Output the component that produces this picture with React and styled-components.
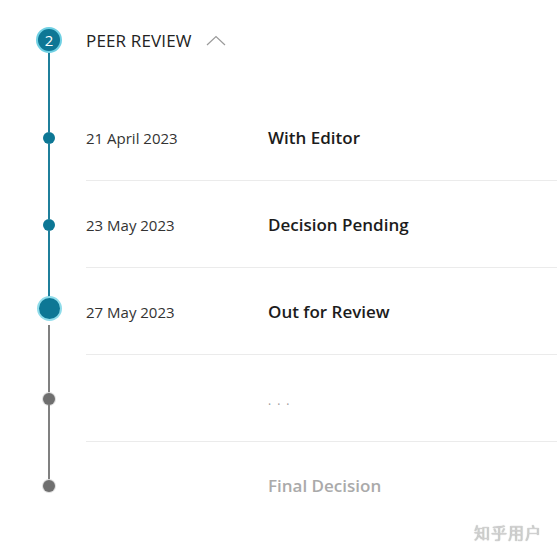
import React from 'react'
import styled, { createGlobalStyle } from 'styled-components'

const GlobalStyle = createGlobalStyle`
  body {
    margin: 0;
    background: #fff;
    font-family: "Open Sans", "Noto Sans", sans-serif;
  }
`

const TEAL = '#1f7f9b'
const GREY = '#808080'

const Page = styled.div`
  position: relative;
  width: 557px;
  height: 552px;
  padding: 27px 0 0 36px;
  box-sizing: border-box;
  overflow: hidden;
`

const Header = styled.div`
  display: flex;
  height: 67px;
  gap: 24px;
`

const Rail = styled.div`
  width: 26px;
  flex: none;
  display: flex;
  flex-direction: column;
  align-items: center;
`

const Segment = styled.div`
  flex: 1;
  width: 1.5px;
  background: ${p => (p.$color ? p.$color : 'transparent')};
`

const StageBadge = styled.div`
  width: 26px;
  height: 26px;
  box-sizing: border-box;
  border-radius: 50%;
  background: #0d7795;
  border: 2px solid #6fd0e3;
  color: #fff;
  font-size: 15px;
  display: flex;
  align-items: center;
  justify-content: center;
  flex: none;
`

const HeaderTitle = styled.div`
  height: 26px;
  display: flex;
  align-items: center;
  gap: 14px;
  font-size: 17px;
  letter-spacing: 0.15px;
  color: #222;
`

const Row = styled.div`
  display: flex;
  height: 87px;
  gap: 24px;
`

const Dot = styled.div`
  flex: none;
  width: ${p => (p.$big ? '21px' : '12px')};
  height: ${p => (p.$big ? '21px' : '12px')};
  border-radius: 50%;
  background: ${p => (p.$done ? '#0d7795' : '#6f6f6f')};
  box-shadow: ${p =>
    p.$big ? '0 0 0 2px #8fdcea' : p.$done ? 'none' : '0 0 0 1px #ddd'};
  margin: ${p => (p.$big ? '0 0 6px' : '0')};
`

const Content = styled.div`
  flex: 1;
  display: flex;
  align-items: center;
  border-bottom: 1px solid ${p => (p.$last ? 'transparent' : '#ebebeb')};
`

const DateText = styled.div`
  width: 182px;
  flex: none;
  font-size: 15px;
  color: #333;
  padding-top: 1px;
`

const Title = styled.div`
  font-size: 17px;
  font-weight: 600;
  color: ${p => (p.$muted ? '#aaa' : '#1c1c1c')};
`

const Ellipsis = styled.div`
  font-size: 12px;
  color: #999;
  letter-spacing: 6px;
  padding-top: 13px;
`

const Watermark = styled.div`
  position: absolute;
  right: 15px;
  bottom: 8px;
  font-family: "Noto Sans CJK SC", sans-serif;
  font-size: 16px;
  color: #d0d0d0;
  letter-spacing: 1px;
  text-shadow: 0 0 1px #999;
`

const Chevron = () => (
  <svg width="20" height="11" viewBox="0 0 20 11" fill="none">
    <polyline points="1,10 10,1.5 19,10" stroke="#9a9a9a" strokeWidth="1.2" />
  </svg>
)

const steps = [
  { date: '21 April 2023', title: 'With Editor', top: TEAL, bottom: TEAL, done: true },
  { date: '23 May 2023', title: 'Decision Pending', top: TEAL, bottom: TEAL, done: true },
  { date: '27 May 2023', title: 'Out for Review', top: TEAL, bottom: GREY, done: true, big: true },
  { date: '', dots: true, top: GREY, bottom: GREY },
  { date: '', title: 'Final Decision', top: GREY, muted: true, last: true },
]

const App = () => {
  return (
    <Page>
      <GlobalStyle />
      <Header>
        <Rail>
          <StageBadge>2</StageBadge>
          <Segment $color={TEAL} />
        </Rail>
        <HeaderTitle>
          PEER REVIEW
          <Chevron />
        </HeaderTitle>
      </Header>
      {steps.map((s, i) => (
        <Row key={i}>
          <Rail>
            <Segment $color={s.top} />
            <Dot $done={s.done} $big={s.big} />
            <Segment $color={s.bottom} />
          </Rail>
          <Content $last={s.last}>
            <DateText>{s.date}</DateText>
            {s.dots ? <Ellipsis>···</Ellipsis> : <Title $muted={s.muted}>{s.title}</Title>}
          </Content>
        </Row>
      ))}
      <Watermark>知乎用户</Watermark>
    </Page>
  )
}

export default App
